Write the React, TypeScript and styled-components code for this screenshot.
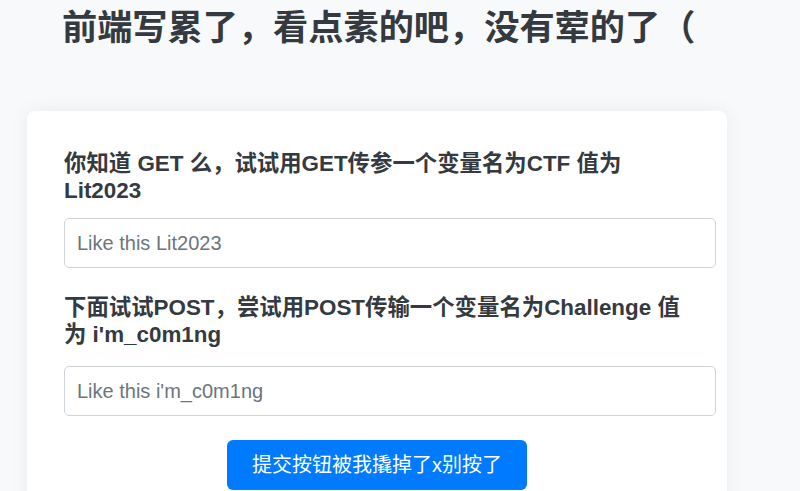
import React from 'react';
import styled, { createGlobalStyle } from 'styled-components';

const GlobalStyle = createGlobalStyle`
	html, body {
		margin: 0;
		padding: 0;
		background: #f8f9fa;
	}
	body {
		font-family: 'Liberation Sans', 'Noto Sans CJK SC', sans-serif;
		color: #343a40;
	}
`;

const App = () => {
	return (
		<>
			<GlobalStyle />
			<Page>
				<Title>前端写累了，看点素的吧，没有荤的了（</Title>
				<Card>
					<Form onSubmit={(e) => e.preventDefault()}>
						<Label htmlFor='ctf' gap={13}>
							你知道 GET 么，试试用GET传参一个变量名为CTF 值为 Lit2023
						</Label>
						<Input id='ctf' name='CTF' placeholder='Like this Lit2023' />

						<Label htmlFor='challenge' gap={17} spaced>
							下面试试POST，尝试用POST传输一个变量名为Challenge 值为 i'm_c0m1ng
						</Label>
						<Input
							id='challenge'
							name='Challenge'
							placeholder="Like this i'm_c0m1ng"
						/>

						<SubmitButton type='button'>提交按钮被我撬掉了x别按了</SubmitButton>
					</Form>
				</Card>
			</Page>
		</>
	);
};

export default App;

const Page = styled.div`
	padding: 7px 0 0 27px;
	width: 700px;
`;

const Title = styled.h1`
	margin: 0 0 62px 35px;
	font-size: 35.2px;
	line-height: 1.2;
	font-weight: 700;
	color: #343a40;
	white-space: nowrap;
`;

const Card = styled.div`
	background: #fff;
	border-radius: 8px;
	box-shadow: 0 0 20px rgba(0, 0, 0, 0.06);
	padding: 40px 37px 40px;
`;

const Form = styled.form`
	display: flex;
	flex-direction: column;
	align-items: flex-start;
`;

const Label = styled.label<{ gap: number; spaced?: boolean }>`
	display: block;
	font-size: 22.4px;
	line-height: 1.2;
	font-weight: 700;
	color: #343a40;
	margin-top: ${({ spaced }) => (spaced ? '27px' : '0')};
	margin-bottom: ${({ gap }) => gap}px;
`;

const Input = styled.input`
	box-sizing: content-box;
	width: 100%;
	padding: 12px;
	font-family: inherit;
	font-size: 20px;
	line-height: 24px;
	height: 24px;
	border: 1px solid #ced4da;
	border-radius: 5px;
	color: #495057;
	background: #fff;
	outline: none;

	&::placeholder {
		color: #6c757d;
	}
`;

const SubmitButton = styled.button`
	align-self: center;
	margin-top: 24px;
	width: 300px;
	padding: 10px 0;
	font-family: inherit;
	font-size: 20px;
	line-height: 1.5;
	color: #fff;
	background: #007bff;
	border: none;
	border-radius: 6px;
	cursor: pointer;
`;
